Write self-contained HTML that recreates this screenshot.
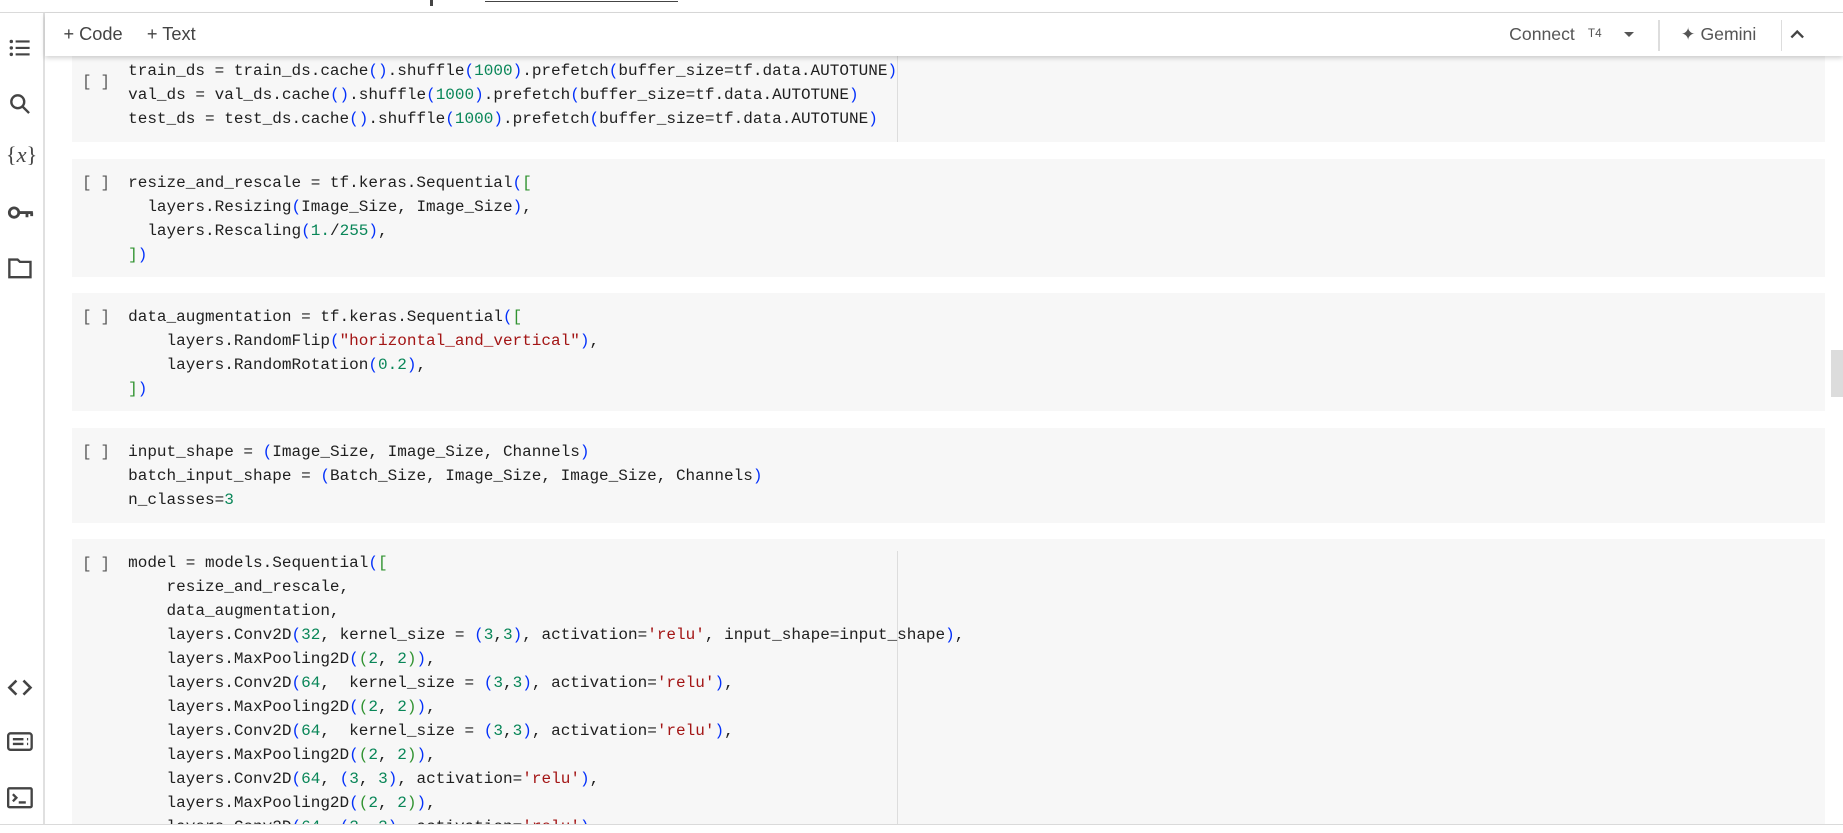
<!DOCTYPE html>
<html><head><meta charset="utf-8"><style>
html,body{margin:0;padding:0;background:#fff;overflow:hidden}
#w{width:1568px;height:709px;position:relative;zoom:1.17538;font-family:"Liberation Sans",sans-serif;overflow:hidden}
.abs{position:absolute}
.cell{position:absolute;left:61px;width:1492px;background:#f7f7f7}
.code{position:absolute;left:48px;font-family:"Liberation Mono",monospace;font-size:13.64px;line-height:20.4px;color:#1f1f1f;white-space:pre}
.br{position:absolute;left:9px;font-family:"Liberation Mono",monospace;font-size:13px;color:#555;white-space:pre}
.b{color:#0431fa}.n{color:#098658}.s{color:#a31515}.g{color:#319331}
.ruler{position:absolute;left:702px;width:1px;background:#ddd}
.ic{position:absolute;left:6px}
</style></head><body><div id="w">
<div class="abs" style="left:0;top:10px;width:1568px;height:1px;background:#dadada"></div>
<div class="abs" style="left:413px;top:1px;width:164px;height:1px;background:#444"></div>
<div class="abs" style="left:366px;top:0;width:2px;height:5px;background:#444"></div>
<!-- sidebar -->
<div class="abs" style="left:37px;top:11px;width:1px;height:690px;background:#e0e0e0"></div>
<svg class="ic" style="top:30px" width="22" height="22" viewBox="0 0 24 24" fill="#444"><circle cx="4" cy="6" r="1.6"/><circle cx="4" cy="12" r="1.6"/><circle cx="4" cy="18" r="1.6"/><rect x="8" y="5" width="13" height="2"/><rect x="8" y="11" width="13" height="2"/><rect x="8" y="17" width="13" height="2"/></svg>
<svg class="ic" style="top:77px" width="22" height="22" viewBox="0 0 24 24" fill="none" stroke="#444" stroke-width="2.2"><circle cx="10" cy="10" r="6"/><path d="M14.5 14.5l6 6"/></svg>
<div class="abs" style="left:5px;top:121px;font-family:'Liberation Serif',serif;font-size:19px;color:#444">{<i>x</i>}</div>
<svg class="ic" style="top:172px" width="24" height="18" viewBox="0 0 24 18" fill="none" stroke="#444" stroke-width="2.4"><circle cx="6" cy="9" r="4"/><path d="M10 9h12M17 9v4M21 9v3"/></svg>
<svg class="ic" style="top:218px" width="22" height="20" viewBox="0 0 22 20" fill="none" stroke="#444" stroke-width="2"><path d="M2 3h7l2 2h9v13H2z"/></svg>
<svg class="ic" style="top:576px" width="22" height="18" viewBox="0 0 22 18" fill="none" stroke="#444" stroke-width="2.2"><path d="M8 3L2 9l6 6M14 3l6 6-6 6"/></svg>
<svg class="ic" style="top:622px" width="22" height="18" viewBox="0 0 22 18" fill="none" stroke="#444" stroke-width="2"><rect x="1" y="2" width="20" height="14" rx="2"/><path d="M5 7h9M5 11h9M17 7h1M17 11h1"/></svg>
<svg class="ic" style="top:669px" width="22" height="20" viewBox="0 0 22 20" fill="none" stroke="#444" stroke-width="2"><rect x="1" y="2" width="20" height="16" rx="1"/><path d="M5 7l3 3-3 3M10 14h6"/></svg>
<!-- cells -->
<div class="cell" style="top:48px;height:73px"><div class="ruler" style="top:0;height:73px"></div>
<div class="br" style="top:14px">[ ]</div>
<div class="code" style="top:3px">train_ds = train_ds.cache<span class="b">()</span>.shuffle<span class="b">(</span><span class="n">1000</span><span class="b">)</span>.prefetch<span class="b">(</span>buffer_size=tf.data.AUTOTUNE<span class="b">)</span>
val_ds = val_ds.cache<span class="b">()</span>.shuffle<span class="b">(</span><span class="n">1000</span><span class="b">)</span>.prefetch<span class="b">(</span>buffer_size=tf.data.AUTOTUNE<span class="b">)</span>
test_ds = test_ds.cache<span class="b">()</span>.shuffle<span class="b">(</span><span class="n">1000</span><span class="b">)</span>.prefetch<span class="b">(</span>buffer_size=tf.data.AUTOTUNE<span class="b">)</span></div></div>
<div class="cell" style="top:135px;height:101px">
<div class="br" style="top:13px">[ ]</div>
<div class="code" style="top:11px">resize_and_rescale = tf.keras.Sequential<span class="b">(</span><span class="g">[</span>
  layers.Resizing<span class="b">(</span>Image_Size, Image_Size<span class="b">)</span>,
  layers.Rescaling<span class="b">(</span><span class="n">1.</span>/<span class="n">255</span><span class="b">)</span>,
<span class="g">]</span><span class="b">)</span></div></div>
<div class="cell" style="top:249px;height:101px">
<div class="br" style="top:13px">[ ]</div>
<div class="code" style="top:11px">data_augmentation = tf.keras.Sequential<span class="b">(</span><span class="g">[</span>
    layers.RandomFlip<span class="b">(</span><span class="s">"horizontal_and_vertical"</span><span class="b">)</span>,
    layers.RandomRotation<span class="b">(</span><span class="n">0.2</span><span class="b">)</span>,
<span class="g">]</span><span class="b">)</span></div></div>
<div class="cell" style="top:364px;height:81px">
<div class="br" style="top:13px">[ ]</div>
<div class="code" style="top:11px">input_shape = <span class="b">(</span>Image_Size, Image_Size, Channels<span class="b">)</span>
batch_input_shape = <span class="b">(</span>Batch_Size, Image_Size, Image_Size, Channels<span class="b">)</span>
n_classes=<span class="n">3</span></div></div>
<div class="cell" style="top:459px;height:250px"><div class="ruler" style="top:10px;height:240px"></div>
<div class="br" style="top:13px">[ ]</div>
<div class="code" style="top:11px">model = models.Sequential<span class="b">(</span><span class="g">[</span>
    resize_and_rescale,
    data_augmentation,
    layers.Conv2D<span class="b">(</span><span class="n">32</span>, kernel_size = <span class="b">(</span><span class="n">3</span>,<span class="n">3</span><span class="b">)</span>, activation=<span class="s">'relu'</span>, input_shape=input_shape<span class="b">)</span>,
    layers.MaxPooling2D<span class="b">(</span><span class="g">(</span><span class="n">2</span>, <span class="n">2</span><span class="g">)</span><span class="b">)</span>,
    layers.Conv2D<span class="b">(</span><span class="n">64</span>,  kernel_size = <span class="b">(</span><span class="n">3</span>,<span class="n">3</span><span class="b">)</span>, activation=<span class="s">'relu'</span><span class="b">)</span>,
    layers.MaxPooling2D<span class="b">(</span><span class="g">(</span><span class="n">2</span>, <span class="n">2</span><span class="g">)</span><span class="b">)</span>,
    layers.Conv2D<span class="b">(</span><span class="n">64</span>,  kernel_size = <span class="b">(</span><span class="n">3</span>,<span class="n">3</span><span class="b">)</span>, activation=<span class="s">'relu'</span><span class="b">)</span>,
    layers.MaxPooling2D<span class="b">(</span><span class="g">(</span><span class="n">2</span>, <span class="n">2</span><span class="g">)</span><span class="b">)</span>,
    layers.Conv2D<span class="b">(</span><span class="n">64</span>, <span class="b">(</span><span class="n">3</span>, <span class="n">3</span><span class="b">)</span>, activation=<span class="s">'relu'</span><span class="b">)</span>,
    layers.MaxPooling2D<span class="b">(</span><span class="g">(</span><span class="n">2</span>, <span class="n">2</span><span class="g">)</span><span class="b">)</span>,
    layers.Conv2D<span class="b">(</span><span class="n">64</span>, <span class="b">(</span><span class="n">3</span>, <span class="n">3</span><span class="b">)</span>, activation=<span class="s">'relu'</span><span class="b">)</span>,</div></div>
<!-- toolbar -->
<div class="abs" style="left:38px;top:11px;width:1530px;height:37px;background:#fff;box-shadow:0 2px 4px rgba(0,0,0,0.18)">
<div class="abs" style="left:16px;top:9px;font-size:15.5px;color:#444">+ Code</div>
<div class="abs" style="left:87px;top:9px;font-size:15.5px;color:#444">+ Text</div>
<div class="abs" style="left:1246px;top:9px;font-size:15px;color:#555">Connect</div>
<div class="abs" style="left:1313px;top:12px;font-size:10px;color:#555">T4</div>
<div class="abs" style="left:1344px;top:16px;width:0;height:0;border-left:5px solid transparent;border-right:5px solid transparent;border-top:5px solid #555"></div>
<div class="abs" style="left:1373px;top:6px;width:1px;height:26px;background:#ddd"></div>
<div class="abs" style="left:1392px;top:9px;font-size:15px;color:#555">✦ Gemini</div>
<div class="abs" style="left:1477px;top:6px;width:1px;height:26px;background:#ddd"></div>
<svg class="abs" style="left:1484px;top:13px" width="14" height="10" viewBox="0 0 14 10" fill="none" stroke="#444" stroke-width="2"><path d="M2 8l5-5 5 5"/></svg>
</div>
<div class="abs" style="left:1558px;top:298px;width:10px;height:40px;background:#dcdcdc"></div>
<div class="abs" style="left:0;top:701px;width:1568px;height:1px;background:#dadada"></div>
<div class="abs" style="left:0;top:702px;width:1568px;height:10px;background:#fff"></div>
</div></body></html>
